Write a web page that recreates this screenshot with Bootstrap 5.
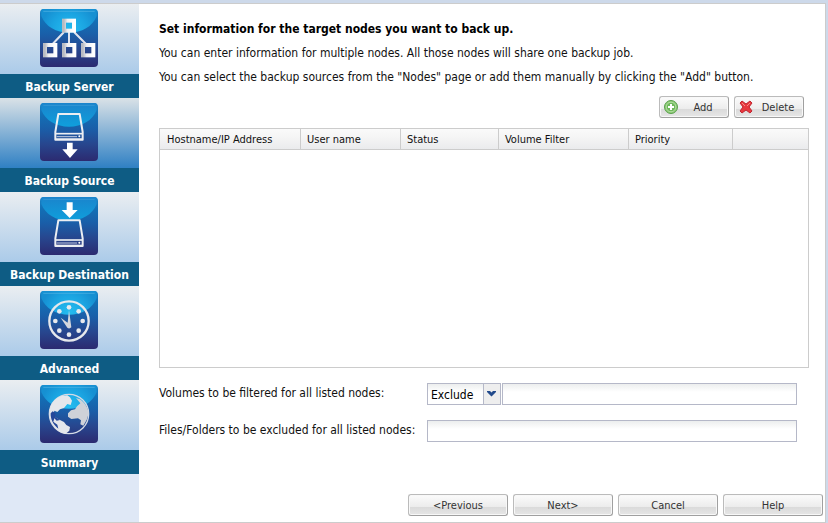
<!DOCTYPE html>
<html lang="en">
<head>
<meta charset="utf-8">
<meta name="viewport" content="width=device-width, initial-scale=1">
<title>Backup Wizard</title>
<link href="https://cdn.jsdelivr.net/npm/bootstrap@5.3.0/dist/css/bootstrap.min.css" rel="stylesheet">
<style>
  body { font-family: "DejaVu Sans Condensed", "Noto Sans", sans-serif; font-size: 12px; line-height: 16px; color: #111; background: #cdd9ea; }
  .wizard { min-height: 100vh; padding: 3px 2px 0 0; }
  .frame { border: 1px solid #ccc; border-left: 0; background: #fff; }
  .steps { flex: 0 0 139px; background: #dfe8f6; }
  .step { color: #fff; font-weight: 700; text-decoration: none; }
  .step-picture { height: 70px; padding: 5px 1px 0 0; background: linear-gradient(#eaeef1, #abcbe9); }
  .step.active .step-picture { background: linear-gradient(#dae2e7, #2f80c4); }
  .step-picture svg { width: 58px; height: 58px; }
  .step-label { height: 24px; line-height: 26px; background: #0e5c84; }
  .content-pane { padding: 17px 2px 6px 20px; min-width: 0; }
  .heading { font-size: 12px; line-height: 16px; font-weight: 700; color: #000; }
  .ext-btn { height: 22px; padding: 2px 4px 0; font: inherit; font-size: 11px; color: #333; border: 1px solid #aaa; border-color: #bbb #a0a0a0 #a0a0a0 #bbb; border-radius: 3px;
    background: linear-gradient(#fbfbfb, #ececec 60%, #dadada 60%, #e6e6e6); box-shadow: inset 0 0 0 1px #f8f8f8; }
  .tool-btn { width: 70px; padding: 0 4px; }
  .tool-btn span { padding-top: 2px; }
  .nav-btn { width: 100px; }
  .tools { padding: 11px 5px 10px 0; gap: 5px; }
  .nodes-panel { padding-right: 14px; }
  .node-grid { border: 1px solid #ccc; min-height: 240px; }
  .node-table { table-layout: fixed; border-collapse: separate; border-spacing: 0; font-size: 11px; }
  .node-table th { height: 21px; padding: 2px 6px 0; font-weight: 400; border-right: 1px solid #ccc; border-bottom: 1px solid #ccc; background: linear-gradient(#fafafa, #f5f5f5 40%, #eaebed); }
  .node-table th:first-child { padding-left: 7px; }
  .node-table th:last-child { border-right: 0; }
  .filters { padding: 15px 26px 52px 0; }
  .filter-rows { gap: 15px; }
  .filter-row { gap: 1px; }
  .filter-row label { flex: 0 0 268px; white-space: nowrap; line-height: 20px; }
  .filter-row select { margin-left: -1px; }
  .ext-field { height: 22px; border: 1px solid #b5b8c8; border-radius: 0; font: inherit; color: #000; padding: 0 4px; min-width: 0; background: linear-gradient(#eceeee, #fff 8px); }
  .mode-select { width: 74px; padding: 1px 20px 0 3px; appearance: none;
    background: url("data:image/svg+xml,%3Csvg xmlns='http://www.w3.org/2000/svg' width='17' height='20'%3E%3Cpath fill='%23eee' d='M0 0h17v20H0z'/%3E%3Cpath fill='%23b5b8c8' d='M0 0h1v20H0z'/%3E%3Cpath fill='%23234b8c' d='M4 7h3l1.5 1.5L10 7h3v1l-4.5 4.5L4 8z'/%3E%3C/svg%3E") right top no-repeat, linear-gradient(#eceeee, #fff 8px); }
  .nav-bar { gap: 5px; }
</style>
</head>
<body>
<svg width="0" height="0" class="position-absolute" aria-hidden="true">
  <defs>
    <linearGradient id="tile" x1="0" y1="0" x2="0" y2="1"><stop offset="0" stop-color="#1a86c8"/><stop offset=".2" stop-color="#1270b6"/><stop offset=".45" stop-color="#1a5ea8"/><stop offset=".7" stop-color="#27478f"/><stop offset="1" stop-color="#2c2a70"/></linearGradient>
    <radialGradient id="glow" gradientUnits="userSpaceOnUse" cx="207" cy="92" r="84"><stop offset="0" stop-color="#25bdf0"/><stop offset=".6" stop-color="#1ba5e2"/><stop offset="1" stop-color="#1690d2"/></radialGradient>
    <linearGradient id="gloss" x1="0" y1="0" x2="0" y2="1"><stop offset="0" stop-color="#1a84cc"/><stop offset="1" stop-color="#0f9fdc"/></linearGradient>
    <linearGradient id="silver" x1="0" y1="0" x2="1" y2="0"><stop offset="0" stop-color="#b9bbc2"/><stop offset=".35" stop-color="#f0f0f3"/><stop offset="1" stop-color="#fff"/></linearGradient>
    <clipPath id="tile-shape"><rect x="120" y="27" width="174" height="174" rx="12"/></clipPath>
    <g id="base">
      <g clip-path="url(#tile-shape)">
        <path fill="url(#tile)" d="M120 27h174v174H120z"/>
        <path fill="url(#glow)" d="M124 27H290V48C278 80 245 98 207 98S136 80 124 48z"/>
        <path stroke="#55b5e4" stroke-width="2" d="M130 34H284"/>
      </g>
    </g>
    <g id="base-flat">
      <g clip-path="url(#tile-shape)">
        <path fill="url(#tile)" d="M120 27h174v174H120z"/>
        <path fill="url(#gloss)" d="M124 27H290V48C278 80 245 98 207 98S136 80 124 48z"/>
        <path stroke="#3f9fd6" stroke-width="2" d="M130 34H284"/>
      </g>
    </g>
    <g id="drive">
      <path fill="none" stroke="#eceef2" stroke-width="6" stroke-linejoin="round" d="M175 60H239L248 114V137H166V114Z"/>
      <path fill="none" stroke="#eceef2" stroke-width="5" d="M166 119H248"/>
      <path fill="none" stroke="#c3cbe0" stroke-width="3" d="M170 128H231"/>
      <path fill="none" stroke="#eceef2" stroke-width="4" d="M168 135H246"/>
      <circle cx="238" cy="127" r="3" fill="#fff"/>
    </g>
  </defs>
</svg>
<div class="wizard d-flex flex-column">
  <div class="frame d-flex flex-grow-1">
    <nav class="steps d-flex flex-column text-center" aria-label="Wizard steps">
      <a class="step d-block" href="#"><div class="step-picture">
        <svg class="d-block mx-auto" viewBox="120 27 174 174" aria-hidden="true"><use href="#base"/>
          <path stroke="#dfe4ef" stroke-width="6" d="M192 96L158 132M207 96V132M222 96L258 132"/>
          <g fill="none" stroke="url(#silver)" stroke-width="12"><rect x="192" y="62" width="30" height="30"/><rect x="135" y="135" width="31" height="31"/><rect x="192" y="135" width="31" height="31"/><rect x="249" y="135" width="31" height="31"/></g>
        </svg></div><div class="step-label">Backup Server</div></a>
      <a class="step active d-block" href="#" aria-current="step"><div class="step-picture">
        <svg class="d-block mx-auto" viewBox="120 27 174 174" aria-hidden="true"><use href="#base-flat"/><use href="#drive"/>
          <path fill="#fff" d="M201 146H218V166H233L210 192L187 166H201z"/>
        </svg></div><div class="step-label">Backup Source</div></a>
      <a class="step d-block" href="#"><div class="step-picture">
        <svg class="d-block mx-auto" viewBox="120 27 174 174" aria-hidden="true"><use href="#base-flat"/><use href="#drive" y="37"/>
          <path fill="#fff" d="M200 43H218V66H233L209 90L185 66H200z"/>
        </svg></div><div class="step-label">Backup Destination</div></a>
      <a class="step d-block" href="#"><div class="step-picture">
        <svg class="d-block mx-auto" viewBox="120 27 174 174" aria-hidden="true"><use href="#base"/>
          <circle cx="207" cy="117" r="59" fill="none" stroke="#e6e8ec" stroke-width="7"/>
          <g fill="#e8eaee"><circle cx="207" cy="76" r="7"/><circle cx="236" cy="88" r="7"/><circle cx="248" cy="117" r="7"/><circle cx="236" cy="146" r="7"/><circle cx="207" cy="158" r="7"/><circle cx="178" cy="146" r="7"/><circle cx="166" cy="117" r="7"/><circle cx="178" cy="88" r="7"/></g>
          <path fill="#d4d7dd" d="M207 84L214 136Q208 142 202 137L182 107L203 122Z"/>
        </svg></div><div class="step-label">Advanced</div></a>
      <a class="step d-block" href="#"><div class="step-picture">
        <svg class="d-block mx-auto" viewBox="120 27 174 174" aria-hidden="true"><use href="#base"/>
          <circle cx="207" cy="114" r="59" fill="none" stroke="#d4dae5" stroke-width="4"/>
          <path fill="#e5e7eb" d="M148 110C150 86 163 68 184 60L202 58L210 64L216 74L212 87L202 84L192 96L180 100L172 108L163 104L161 115L166 124L180 132L192 138L199 147L210 153L208 164L196 174C170 168 148 143 148 110Z"/>
          <path fill="#25499a" d="M158 106L166 111L165 122L180 132L170 134L163 127L160 137L172 146L175 158C159 146 151 128 152 112Z"/>
          <path fill="#cfd2d8" d="M228 66L240 70C254 80 264 94 266 112L261 130L250 149L241 145L243 133L234 127L214 129L204 122V112L213 103L225 100L231 91L241 82Z"/>
        </svg></div><div class="step-label">Summary</div></a>
    </nav>
    <main class="content-pane flex-grow-1 d-flex flex-column">
      <h1 class="heading mb-2">Set information for the target nodes you want to back up.</h1>
      <p class="mb-2">You can enter information for multiple nodes. All those nodes will share one backup job.</p>
      <p class="mb-0">You can select the backup sources from the "Nodes" page or add them manually by clicking the "Add" button.</p>
      <div class="nodes-panel flex-grow-1 d-flex flex-column">
        <div class="tools d-flex justify-content-end">
          <button type="button" class="ext-btn tool-btn d-flex align-items-center">
            <svg width="14" height="14" viewBox="0 0 14 14" aria-hidden="true"><circle cx="7" cy="7" r="6.5" fill="#8ccb72" stroke="#5a9f4e"/><circle cx="7" cy="7" r="4.8" fill="#6fb95c" stroke="#b5dda5"/><path stroke="#fff" stroke-width="2" d="M7 4v6M4 7h6"/></svg>
            <span class="flex-grow-1 ps-1">Add</span></button>
          <button type="button" class="ext-btn tool-btn d-flex align-items-center">
            <svg width="14" height="14" viewBox="0 0 14 14" aria-hidden="true"><path fill="#e8393f" stroke="#c02630" stroke-linejoin="round" d="M1 3L3 1L7 4L11 1L13 3L10 7L13 11L11 13L7 10L3 13L1 11L4 7Z"/><path stroke="#f78b86" d="M3 3L6 6M11 3L8 6"/></svg>
            <span class="flex-grow-1 ps-1">Delete</span></button>
        </div>
        <div class="node-grid flex-grow-1">
          <table class="node-table w-100">
            <colgroup><col style="width:21.76%"><col style="width:15.43%"><col style="width:15.12%"><col style="width:20.06%"><col style="width:16.05%"><col></colgroup>
            <thead><tr><th scope="col">Hostname/IP Address</th><th scope="col">User name</th><th scope="col">Status</th><th scope="col">Volume Filter</th><th scope="col">Priority</th><th></th></tr></thead>
            <tbody></tbody>
          </table>
        </div>
      </div>
      <form class="filters">
        <div class="filter-rows d-flex flex-column">
          <div class="filter-row d-flex">
            <label for="volumes">Volumes to be filtered for all listed nodes:</label>
            <select class="ext-field mode-select flex-shrink-0" aria-label="Volume filter mode"><option>Exclude</option><option>Include</option></select>
            <input id="volumes" type="text" class="ext-field flex-grow-1">
          </div>
          <div class="filter-row d-flex gap-0">
            <label for="files">Files/Folders to be excluded for all listed nodes:</label>
            <input id="files" type="text" class="ext-field flex-grow-1">
          </div>
        </div>
      </form>
      <div class="nav-bar d-flex justify-content-end">
        <button type="button" class="ext-btn nav-btn">&lt;Previous</button>
        <button type="button" class="ext-btn nav-btn">Next&gt;</button>
        <button type="button" class="ext-btn nav-btn">Cancel</button>
        <button type="button" class="ext-btn nav-btn">Help</button>
      </div>
    </main>
  </div>
</div>
<script src="https://cdn.jsdelivr.net/npm/bootstrap@5.3.0/dist/js/bootstrap.bundle.min.js"></script>
</body>
</html>
